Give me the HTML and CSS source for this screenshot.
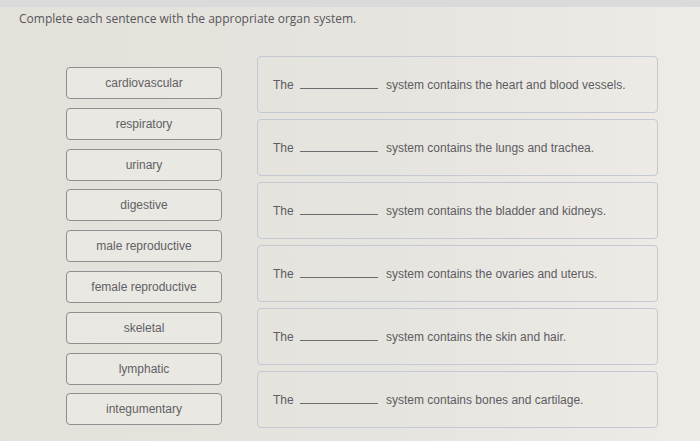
FILE: index.html
```html
<!DOCTYPE html>
<html>

<head>
    <title>Organ systems</title>
    <meta charset="utf-8">
    <meta name="viewport" content="width=device-width, initial-scale=1.0">
    <link rel="stylesheet" href="styles.css">
</head>

<body>
    <div class="topbar"></div>
    <h1 class="opgave">Complete each sentence with the appropriate organ system.</h1>

    <main class="match">
        <!-- svar der kan trækkes -->
        <section class="svar">
            <div class="kort">cardiovascular</div>
            <div class="kort">respiratory</div>
            <div class="kort">urinary</div>
            <div class="kort">digestive</div>
            <div class="kort">male reproductive</div>
            <div class="kort">female reproductive</div>
            <div class="kort">skeletal</div>
            <div class="kort">lymphatic</div>
            <div class="kort">integumentary</div>
        </section>

        <!-- sætninger -->
        <section class="saetninger">
            <div class="linje"><span class="the">The</span><span class="blank"></span><span>system contains the heart and blood vessels.</span></div>
            <div class="linje"><span class="the">The</span><span class="blank"></span><span>system contains the lungs and trachea.</span></div>
            <div class="linje"><span class="the">The</span><span class="blank"></span><span>system contains the bladder and kidneys.</span></div>
            <div class="linje"><span class="the">The</span><span class="blank"></span><span>system contains the ovaries and uterus.</span></div>
            <div class="linje"><span class="the">The</span><span class="blank"></span><span>system contains the skin and hair.</span></div>
            <div class="linje"><span class="the">The</span><span class="blank"></span><span>system contains bones and cartilage.</span></div>
        </section>
    </main>
</body>

</html>
```

FILE: styles.css
```css
body {
    margin: 0;
    height: 441px;
    overflow: hidden;
    background: linear-gradient(90deg, #e3e1da 0%, #e6e4de 55%, #ece9e4 85%, #efece8 100%);
    font-family: "Liberation Sans", Arial, sans-serif;
    color: #5a5a5e;
}

.topbar {
    height: 7px;
    background: #dadadb;
}

.opgave {
    margin: 0;
    padding: 4px 0 0 19px;
    font-family: "Open Sans", sans-serif;
    font-weight: normal;
    font-size: 12px;
    line-height: 16px;
    color: #56565c;
}

.match {
    display: flex;
    align-items: flex-start;
    margin-top: 29px;
}

.svar {
    display: flex;
    flex-direction: column;
    gap: 8.8px;
    margin: 11px 0 0 66px;
    width: 156px;
}

.kort {
    height: 30px;
    border: 1px solid #8f8f92;
    border-radius: 4px;
    display: flex;
    align-items: center;
    justify-content: center;
    font-size: 12px;
    color: #616165;
    background: rgba(240, 238, 234, 0.5);
}

.saetninger {
    display: flex;
    flex-direction: column;
    gap: 6px;
    margin-left: 35px;
    width: 401px;
}

.linje {
    height: 55px;
    border: 1px solid #c3c8d3;
    border-radius: 4px;
    display: flex;
    align-items: center;
    padding-left: 15px;
    font-size: 12px;
    color: #5c5c62;
}

.the {
    width: 27px;
}

.blank {
    width: 78px;
    height: 7px;
    border-bottom: 1px solid #6c6c70;
    margin-right: 8px;
}
```
